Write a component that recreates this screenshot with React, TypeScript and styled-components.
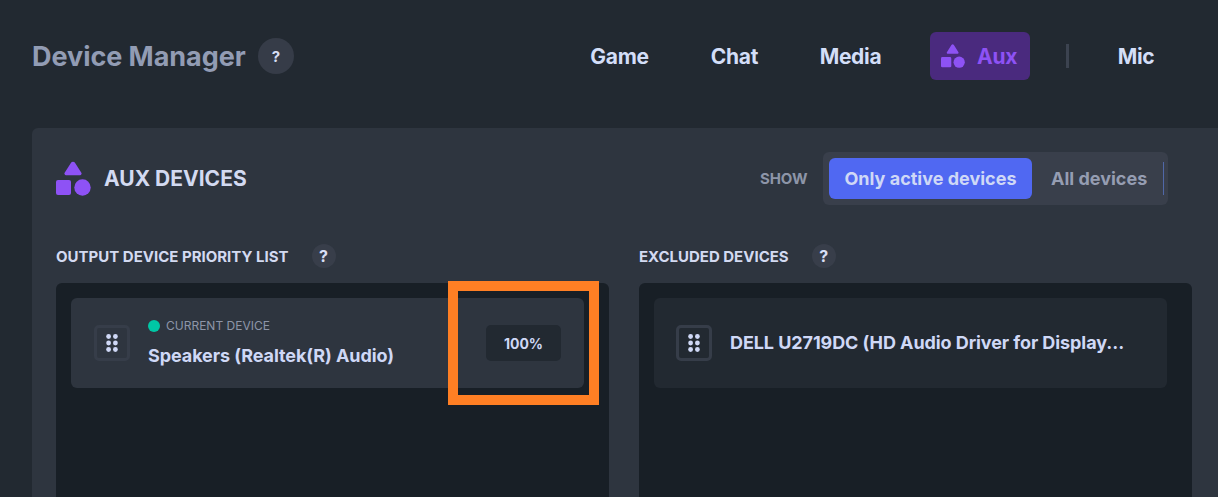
import React from "react";
import styled, { createGlobalStyle } from "styled-components";

const Global = createGlobalStyle`
  html, body { margin: 0; padding: 0; height: 497px; overflow: hidden; background: #222931; }
  * { box-sizing: border-box; }
  body { font-family: Inter, "Liberation Sans", sans-serif; }
`;

const Page = styled.div`
  position: relative;
  width: 1218px;
  height: 497px;
  overflow: hidden;
  padding: 32px 0 0 32px;
`;

const Header = styled.header`
  display: flex;
  align-items: center;
  height: 48px;
  margin-bottom: 48px;
`;

const Title = styled.h1`
  margin: 0 13px 0 0;
  width: 213px;
  white-space: nowrap;
  font-size: 27px;
  font-weight: 700;
  letter-spacing: -0.05px;
  color: #929cb4;
`;

const Help = styled.span<{ $size: number; $bg: string; $font: number }>`
  display: flex;
  align-items: center;
  justify-content: center;
  flex: none;
  width: ${(p) => p.$size}px;
  height: ${(p) => p.$size}px;
  border-radius: 50%;
  background: ${(p) => p.$bg};
  color: #d8dff5;
  font-size: ${(p) => p.$font}px;
  font-weight: 700;
`;

const Nav = styled.nav`
  display: flex;
  align-items: center;
  margin-left: 296px;
`;

const NavItem = styled.span<{ $w: number; $gap: number }>`
  display: flex;
  justify-content: center;
  width: ${(p) => p.$w}px;
  margin-left: ${(p) => p.$gap}px;
  font-size: 21px;
  font-weight: 700;
  letter-spacing: -0.3px;
  white-space: nowrap;
  color: #d3def8;
`;

const ActiveNav = styled.span`
  display: flex;
  align-items: center;
  gap: 12px;
  width: 100px;
  height: 48px;
  padding-left: 11px;
  margin-left: 48px;
  border-radius: 6px;
  background: #4a2a7e;
  color: #8e52f5;
  font-size: 21px;
  font-weight: 700;
  letter-spacing: -0.3px;
`;

const NavDivider = styled.span`
  width: 3px;
  height: 24px;
  margin-left: 36px;
  background: #3c4350;
`;

const Panel = styled.section`
  width: 1186px;
  height: 400px;
  padding: 24px 0 0 24px;
  border-radius: 6px 0 0 0;
  background: #2e353f;
`;

const PanelHead = styled.div`
  display: flex;
  align-items: center;
  height: 53px;
  margin-bottom: 39px;
`;

const PanelTitle = styled.h2`
  margin: 0 0 0 13px;
  width: 143px;
  white-space: nowrap;
  font-size: 21px;
  font-weight: 700;
  letter-spacing: 0;
  color: #d3daf1;
`;

const ShowLabel = styled.span`
  margin-left: 513px;
  width: 47px;
  font-size: 15px;
  font-weight: 700;
  letter-spacing: -0.1px;
  color: #8d95a8;
`;

const Toggle = styled.div`
  position: relative;
  display: flex;
  align-items: center;
  width: 345px;
  height: 53px;
  margin-left: 16px;
  padding: 6px;
  border-radius: 6px;
  background: #393f4b;
`;

const ActiveOption = styled.span`
  display: flex;
  align-items: center;
  justify-content: center;
  width: 203px;
  height: 41px;
  border-radius: 6px;
  background: #5068f2;
  color: #cfd8f6;
  font-size: 18px;
  font-weight: 700;
`;

const Option = styled.span`
  margin-left: 19px;
  color: #959db2;
  font-size: 18px;
  font-weight: 700;
`;

const ToggleEdge = styled.span`
  position: absolute;
  left: 340px;
  top: 10px;
  width: 1px;
  height: 33px;
  background: #5068a8;
`;

const Columns = styled.div`
  display: flex;
  gap: 30px;
`;

const Column = styled.div`
  flex: none;
  width: 553px;
`;

const LabelRow = styled.div`
  display: flex;
  align-items: center;
  gap: 23px;
  height: 24px;
  margin-bottom: 15px;
`;

const Label = styled.h3`
  margin: 0;
  font-size: 15px;
  font-weight: 700;
  letter-spacing: 0;
  color: #d3daf1;
`;

const List = styled.div`
  height: 260px;
  padding: 15px 25px 0 15px;
  border-radius: 6px 6px 0 0;
  background: #181f26;
`;

const Row = styled.div<{ $bg: string; $inset: number }>`
  display: flex;
  align-items: center;
  height: 90px;
  padding-left: ${(p) => p.$inset}px;
  border-radius: 6px;
  background: ${(p) => p.$bg};
`;

const Handle = styled.span`
  display: flex;
  align-items: center;
  justify-content: center;
  flex: none;
  width: 36px;
  height: 36px;
  border: 3px solid #363d49;
  border-radius: 5px;
`;

const Info = styled.div`
  display: flex;
  flex-direction: column;
  gap: 12px;
  margin-left: 18px;
`;

const Status = styled.div`
  display: flex;
  align-items: center;
  gap: 6px;
  font-size: 12px;
  line-height: 14px;
  color: #8d95a8;
`;

const Dot = styled.span`
  width: 12px;
  height: 12px;
  border-radius: 50%;
  background: #00c7a5;
`;

const DeviceName = styled.div`
  font-size: 18px;
  line-height: 22px;
  font-weight: 700;
  letter-spacing: -0.08px;
  color: #cfd8f6;
`;

const Percent = styled.span`
  display: flex;
  align-items: center;
  justify-content: center;
  width: 75px;
  height: 36px;
  margin-left: auto;
  margin-right: 23px;
  border-radius: 5px;
  background: #222931;
  color: #cfd8f6;
  font-size: 14px;
  font-weight: 700;
`;

const Excluded = styled(DeviceName)`
  margin-left: 18px;
`;

const Annotation = styled.div`
  position: absolute;
  left: 448px;
  top: 281px;
  width: 151px;
  height: 124px;
  border: 10px solid #ff7f24;
`;

const Shapes = ({ size }: { size: number }) => (
  <svg width={size} height={size} viewBox="0 0 35 35" fill="#8e52f5" aria-hidden="true">
    <path d="M15.2 1.6a2.2 2.2 0 0 1 3.6 0l6.4 10a1.6 1.6 0 0 1-1.4 2.6H10.2a1.6 1.6 0 0 1-1.4-2.6z" />
    <rect x="0" y="19" width="15" height="15" rx="2" />
    <circle cx="26.5" cy="26.5" r="8.2" />
  </svg>
);

const Grip = () => (
  <svg width="12" height="18" viewBox="0 0 12 18" fill="#cfd8f6" aria-hidden="true">
    {[2.5, 9, 15.5].flatMap((y) =>
      [2.6, 9.4].map((x) => <circle key={`${x}-${y}`} cx={x} cy={y} r="2.4" />)
    )}
  </svg>
);

export default function App() {
  return (
    <Page>
      <Global />
      <Header>
        <Title>Device Manager</Title>
        <Help $size={36} $bg="#363c48" $font={15}>?</Help>
        <Nav>
          <NavItem $w={59} $gap={0}>Game</NavItem>
          <NavItem $w={49} $gap={61}>Chat</NavItem>
          <NavItem $w={63} $gap={60}>Media</NavItem>
          <ActiveNav><Shapes size={24} />Aux</ActiveNav>
          <NavDivider />
          <NavItem $w={38} $gap={48}>Mic</NavItem>
        </Nav>
      </Header>
      <Panel>
        <PanelHead>
          <Shapes size={35} />
          <PanelTitle>AUX DEVICES</PanelTitle>
          <ShowLabel>SHOW</ShowLabel>
          <Toggle>
            <ActiveOption>Only active devices</ActiveOption>
            <Option>All devices</Option>
            <ToggleEdge />
          </Toggle>
        </PanelHead>
        <Columns>
          <Column>
            <LabelRow>
              <Label>OUTPUT DEVICE PRIORITY LIST</Label>
              <Help $size={24} $bg="#383e4a" $font={16}>?</Help>
            </LabelRow>
            <List>
              <Row $bg="#2e353f" $inset={23}>
                <Handle><Grip /></Handle>
                <Info>
                  <Status><Dot />CURRENT DEVICE</Status>
                  <DeviceName>Speakers (Realtek(R) Audio)</DeviceName>
                </Info>
                <Percent>100%</Percent>
              </Row>
            </List>
          </Column>
          <Column>
            <LabelRow>
              <Label>EXCLUDED DEVICES</Label>
              <Help $size={24} $bg="#383e4a" $font={16}>?</Help>
            </LabelRow>
            <List>
              <Row $bg="#222931" $inset={22}>
                <Handle><Grip /></Handle>
                <Excluded>DELL U2719DC (HD Audio Driver for Display...</Excluded>
              </Row>
            </List>
          </Column>
        </Columns>
      </Panel>
      <Annotation />
    </Page>
  );
}
